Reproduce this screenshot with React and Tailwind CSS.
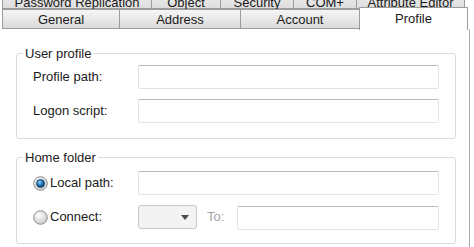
import React from 'react';

const topTabs = [
  { label: 'Password Replication', w: 'w-[150px]' },
  { label: 'Object', w: 'w-[70px]' },
  { label: 'Security', w: 'w-[74px]' },
  { label: 'COM+', w: 'w-[64px]' },
  { label: 'Attribute Editor', w: 'w-[109px]' },
];

const tabs = [
  { label: 'General', w: 'w-[118px]' },
  { label: 'Address', w: 'w-[122px]' },
  { label: 'Account', w: 'w-[120px]' },
];

// kleine Radio-Kugel, wie bei Windows 7
const Radio = ({ checked }) => (
  <svg width="15" height="15" viewBox="0 0 15 15" className="shrink-0">
    <defs>
      <radialGradient id="rOff" cx="40%" cy="35%" r="70%">
        <stop offset="0%" stopColor="#ffffff" />
        <stop offset="100%" stopColor="#c8c8c8" />
      </radialGradient>
      <radialGradient id="rOn" cx="40%" cy="35%" r="65%">
        <stop offset="0%" stopColor="#9fd6ff" />
        <stop offset="45%" stopColor="#2a86c8" />
        <stop offset="100%" stopColor="#0c3a63" />
      </radialGradient>
    </defs>
    <circle cx="7.5" cy="7.5" r="6.8" fill="url(#rOff)" stroke="#8e8f8f" strokeWidth="1" />
    {checked && <circle cx="7.5" cy="7.5" r="4" fill="url(#rOn)" stroke="#1b3f5e" strokeWidth="0.8" />}
  </svg>
);

const Input = ({ className = '' }) => (
  <div className={`h-[24px] bg-white border border-[#e3e3e3] border-t-[#b9b9b9] rounded-[2px] ${className}`} />
);

const App = () => {
  return (
    <div className="w-[474px] h-[247px] bg-white overflow-hidden text-[13px] text-[#1a1a1a]" style={{ fontFamily: '"Liberation Sans", Arial, sans-serif' }}>
      {/* obere, abgeschnittene Reiterzeile */}
      <div className="h-[9px] overflow-hidden flex items-end pl-[2px]">
        {topTabs.map((t) => (
          <div
            key={t.label}
            className={`${t.w} h-[24px] shrink-0 -mr-px flex justify-center pt-[9px] leading-[15px] border border-[#9c9c9c] bg-linear-to-b from-[#f4f4f4] to-[#dedede]`}
          >
            {t.label}
          </div>
        ))}
      </div>

      {/* zweite Reiterzeile */}
      <div className="h-[20px] flex pl-[2px] relative">
        {tabs.map((t) => (
          <div
            key={t.label}
            className={`${t.w} h-[20px] shrink-0 -mr-px flex items-center justify-center pt-px leading-[15px] border border-[#9c9c9c] bg-linear-to-b from-[#f6f6f6] to-[#dadada]`}
          >
            {t.label}
          </div>
        ))}
        <div className="w-[109px] h-[23px] -mt-[2px] shrink-0 relative z-10 flex justify-center pt-[3px] leading-[15px] bg-white border border-b-0 border-[#9c9c9c]">
          Profile
        </div>
      </div>

      {/* Inhalt */}
      <div className="w-[470px] h-[218px] border-r border-[#a9a9a9] pt-[17px] pl-[16px]">
        <fieldset className="w-[440px] border border-[#dcdcdc] rounded-[3px] px-0 pb-[15px]">
          <legend className="ml-[6px] px-[2px] leading-[15px]">User profile</legend>
          <div className="grid grid-cols-[105px_1fr] gap-y-[10px] items-center mt-[4px] px-[16px]">
            <span>Profile path:</span>
            <Input />
            <span>Logon script:</span>
            <Input />
          </div>
        </fieldset>

        <fieldset className="w-[440px] mt-[11px] border border-[#dcdcdc] rounded-[3px] px-0 pb-[13px]">
          <legend className="ml-[6px] px-[2px] leading-[15px]">Home folder</legend>
          <div className="grid grid-cols-[105px_1fr] gap-y-[9px] items-center mt-[6px] px-[16px]">
            <div className="flex items-center gap-[2px]">
              <Radio checked />
              <span>Local path:</span>
            </div>
            <Input />
            <div className="flex items-center gap-[2px]">
              <Radio />
              <span>Connect:</span>
            </div>
            <div className="flex items-center">
              <div className="w-[59px] h-[24px] flex items-center justify-end pr-[7px] bg-[#f3f3f3] border border-[#c6c6c6] rounded-[3px]">
                <svg width="8" height="5" viewBox="0 0 8 5">
                  <path d="M0 0 H8 L4 5 Z" fill="#4a4a4a" />
                </svg>
              </div>
              <span className="ml-[10px] w-[30px] text-[#a3a3a3]">To:</span>
              <Input className="flex-1 mt-[2px]" />
            </div>
          </div>
        </fieldset>
      </div>
    </div>
  );
};

export default App;
